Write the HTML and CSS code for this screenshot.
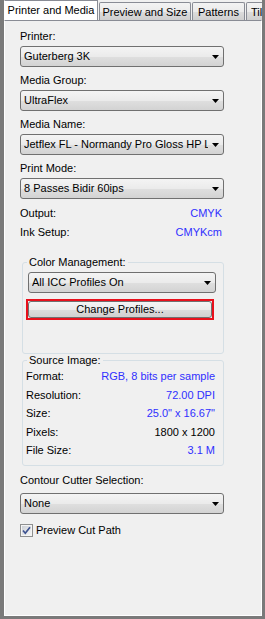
FILE: index.html
```html
<!DOCTYPE html>
<html lang="en">
<head>
    <meta charset="UTF-8">
    <title>Printer and Media</title>
    <link rel="stylesheet" href="styles.css">
</head>
<body>
    <div class="window">
        <div class="tabs">
            <div class="tab active">Printer and Media</div>
            <div class="tab">Preview and Size</div>
            <div class="tab">Patterns</div>
            <div class="tab">Tiling</div>
        </div>

        <div class="page">
            <div class="field">
                <div class="label">Printer:</div>
                <div class="combo">
                    <span class="combo-text">Guterberg 3K</span>
                    <span class="combo-arrow"><svg width="7" height="4" viewBox="0 0 7 4"><polygon points="0,0 7,0 3.5,4" fill="#000"/></svg></span>
                </div>
            </div>
            <div class="field">
                <div class="label">Media Group:</div>
                <div class="combo">
                    <span class="combo-text">UltraFlex</span>
                    <span class="combo-arrow"><svg width="7" height="4" viewBox="0 0 7 4"><polygon points="0,0 7,0 3.5,4" fill="#000"/></svg></span>
                </div>
            </div>
            <div class="field">
                <div class="label">Media Name:</div>
                <div class="combo">
                    <span class="combo-text">Jetflex FL - Normandy Pro Gloss HP L:2</span>
                    <span class="combo-arrow"><svg width="7" height="4" viewBox="0 0 7 4"><polygon points="0,0 7,0 3.5,4" fill="#000"/></svg></span>
                </div>
            </div>
            <div class="field">
                <div class="label">Print Mode:</div>
                <div class="combo">
                    <span class="combo-text">8 Passes Bidir 60ips</span>
                    <span class="combo-arrow"><svg width="7" height="4" viewBox="0 0 7 4"><polygon points="0,0 7,0 3.5,4" fill="#000"/></svg></span>
                </div>
            </div>

            <div class="info">
                <div class="info-row"><span>Output:</span><span class="value">CMYK</span></div>
                <div class="info-row"><span>Ink Setup:</span><span class="value">CMYKcm</span></div>
            </div>

            <fieldset class="group color-group">
                <legend>Color Management:</legend>
                <div class="combo">
                    <span class="combo-text">All ICC Profiles On</span>
                    <span class="combo-arrow"><svg width="7" height="4" viewBox="0 0 7 4"><polygon points="0,0 7,0 3.5,4" fill="#000"/></svg></span>
                </div>
                <div class="highlight">
                    <button class="btn">Change Profiles...</button>
                </div>
            </fieldset>

            <fieldset class="group source-group">
                <legend>Source Image:</legend>
                <div class="info-row"><span>Format:</span><span class="value">RGB, 8 bits per sample</span></div>
                <div class="info-row"><span>Resolution:</span><span class="value">72.00 DPI</span></div>
                <div class="info-row"><span>Size:</span><span class="value">25.0" x 16.67"</span></div>
                <div class="info-row"><span>Pixels:</span><span class="value plain">1800 x 1200</span></div>
                <div class="info-row"><span>File Size:</span><span class="value">3.1 M</span></div>
            </fieldset>

            <div class="field contour">
                <div class="label">Contour Cutter Selection:</div>
                <div class="combo">
                    <span class="combo-text">None</span>
                    <span class="combo-arrow"><svg width="7" height="4" viewBox="0 0 7 4"><polygon points="0,0 7,0 3.5,4" fill="#000"/></svg></span>
                </div>
            </div>

            <label class="check">
                <svg width="13" height="13" viewBox="0 0 13 13">
                    <defs>
                        <linearGradient id="cb" x1="0" y1="0" x2="1" y2="1">
                            <stop offset="0" stop-color="#cbcfd5"/>
                            <stop offset="1" stop-color="#f6f6f6"/>
                        </linearGradient>
                    </defs>
                    <rect x="0.5" y="0.5" width="12" height="12" fill="#f4f4f4" stroke="#8e8f8f"/>
                    <rect x="2" y="2" width="9" height="9" fill="url(#cb)"/>
                    <path d="M3 6.5 L5.3 9.2 L10 3.2" fill="none" stroke="#3d5290" stroke-width="1.7"/>
                </svg>
                <span>Preview Cut Path</span>
            </label>
        </div>
    </div>
</body>
</html>
```

FILE: styles.css
```css
body {
    margin: 0;
    font-family: "Liberation Sans", Arial, sans-serif;
    font-size: 11px;
    color: #000;
}

.window {
    width: 265px;
    height: 619px;
    box-sizing: border-box;
    border-left: 4px solid #7a7a7a;
    border-right: 3px solid #7a7a7a;
    border-bottom: 3px solid #7a7a7a;
    background-color: #f0f0f0;
    display: flex;
    flex-direction: column;
}

/* tab strip */
.tabs {
    height: 20px;
    display: flex;
    align-items: flex-end;
    gap: 1px;
    overflow: hidden;
    flex-shrink: 0;
}

.tab {
    box-sizing: border-box;
    height: 18px;
    padding: 3px 0 0;
    line-height: 13px;
    text-align: center;
    white-space: nowrap;
    border: 1px solid #898c95;
    border-bottom: none;
    border-radius: 2px 2px 0 0;
    background: linear-gradient(#f3f3f3, #ebebeb 50%, #dddddd 51%, #cfcfcf);
    flex-shrink: 0;
}

.tab:nth-child(2) {
    width: 92px;
}

.tab:nth-child(3) {
    width: 53px;
}

.tab:nth-child(4) {
    width: 40px;
    text-align: left;
    padding-left: 4px;
}

.tab.active {
    position: relative;
    z-index: 1;
    width: 94px;
    height: 21px;
    margin-bottom: -1px;
    padding-top: 3px;
    background: #fff;
    border-left-color: #fff;
    border-radius: 0;
}

/* tab page */
.page {
    flex: 1;
    border-top: 1px solid #898c95;
    border-left: 1px solid #fff;
    border-right: 1px solid #fff;
    border-bottom: 1px solid #fff;
    padding: 9px 37px 0 15px;
}

.label {
    line-height: 13px;
    white-space: nowrap;
}

.field {
    margin-bottom: 7px;
}

.field .label {
    margin-bottom: 3px;
}

.combo {
    display: flex;
    align-items: center;
    box-sizing: border-box;
    height: 21px;
    border: 1px solid #707070;
    border-radius: 3px;
    background: linear-gradient(#f4f4f4, #ebebeb 50%, #dfdfdf 51%, #d3d3d3);
    padding-left: 3px;
}

.combo-text {
    flex: 1;
    overflow: hidden;
    white-space: nowrap;
    line-height: 13px;
}

.combo-arrow {
    width: 14px;
    display: flex;
    justify-content: center;
    align-items: center;
    padding-right: 1px;
}

.combo-arrow svg {
    display: block;
}

.info {
    margin-top: 8px;
    display: flex;
    flex-direction: column;
    gap: 6px;
}

.info-row {
    display: flex;
    justify-content: space-between;
    line-height: 13px;
    white-space: nowrap;
    padding-right: 2px;
}

.value {
    color: #2f2fff;
}

.value.plain {
    color: #000;
}

/* group boxes */
.group {
    margin: 0 0 0 2px;
    border: 1px solid #d5dfe5;
    border-radius: 3px;
    min-width: 0;
}

.group legend {
    padding: 0 2px;
    line-height: 13px;
}

.color-group {
    margin-top: 17px;
    padding: 3px 7px 33px 5px;
}

.color-group legend {
    margin-left: -1px;
}

.highlight {
    width: 188px;
    box-sizing: border-box;
    margin: 6px 0 0 -2px;
    border: 2px solid #e8101c;
}

.btn {
    display: block;
    box-sizing: border-box;
    width: 184px;
    height: 17px;
    border: 1px solid #707070;
    border-radius: 3px;
    background: linear-gradient(#f4f4f4, #ebebeb 50%, #dddddd 51%, #d0d0d0);
    font-family: inherit;
    font-size: 11px;
    line-height: 13px;
    padding: 0;
    color: #000;
}

.source-group {
    margin-top: 0;
    padding: 1px 8px 8px 3px;
    display: flex;
    flex-direction: column;
    gap: 5.5px;
}

.source-group legend {
    margin-left: 1px;
}

.source-group .info-row {
    padding-right: 0;
}

.source-group .info-row:first-of-type {
    margin-top: 2px;
}

.contour {
    margin-top: 8px;
    margin-bottom: 0;
}

.contour .label {
    margin-bottom: 6px;
}

.check {
    display: flex;
    align-items: center;
    gap: 3px;
    margin-top: 10px;
    line-height: 13px;
}

.check svg {
    display: block;
}
```
